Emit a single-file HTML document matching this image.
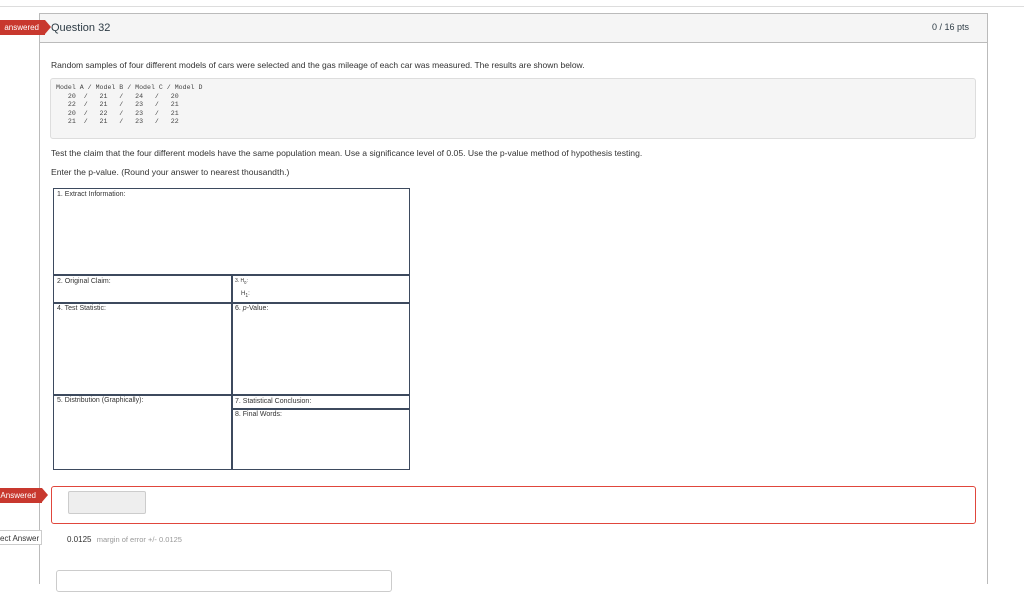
<!DOCTYPE html>
<html><head><style>
body{margin:0;width:1024px;height:581px;overflow:hidden;background:#fff;font-family:"Liberation Sans",sans-serif;position:relative;color:#2d3b45}
.a{position:absolute;white-space:nowrap}
.tag{position:absolute;left:0;height:15px;font-size:8px;line-height:15px;color:#fff;background:#c8382e;text-align:right;padding-right:6px;box-sizing:border-box;white-space:nowrap}
.tag:after{content:"";position:absolute;right:-6px;top:0;border-left:6px solid #c8382e;border-top:7.5px solid transparent;border-bottom:7.5px solid transparent}
.t{font-size:7px;color:#333;position:absolute;white-space:nowrap}
.ln{position:absolute;background:#3d4a5e}
</style></head><body>
<div class="a" style="left:0;top:6px;width:1024px;height:1px;background:#ddd"></div>
<div class="a" style="left:39px;top:13px;width:947px;height:570px;border:1px solid #bbb;border-bottom:none"></div>
<div class="a" style="left:40px;top:14px;width:947px;height:28px;background:#f5f5f5;border-bottom:1px solid #bbb"></div>
<div class="a" style="left:51px;top:22px;font-size:11px;color:#2d3b45">Question 32</div>
<div class="a" style="left:932px;top:22px;font-size:9px;color:#2d3b45">0 / 16 pts</div>
<div class="tag" style="top:20px;width:45px">answered</div>
<div class="a" style="left:51px;top:60px;font-size:8.5px;color:#333">Random samples of four different models of cars were selected and the gas mileage of each car was measured. The results are shown below.</div>
<div class="a" style="left:50px;top:78px;width:924px;height:59px;background:#f5f5f5;border:1px solid #ddd;border-radius:3px"></div>
<pre class="a" style="white-space:pre;margin:0;left:56px;top:84px;font-family:'Liberation Mono',monospace;font-size:6.6px;line-height:8.6px;color:#444">Model A / Model B / Model C / Model D
   20  /   21   /   24   /   20
   22  /   21   /   23   /   21
   20  /   22   /   23   /   21
   21  /   21   /   23   /   22</pre>
<div class="a" style="left:51px;top:148px;font-size:8.6px;color:#333">Test the claim that the four different models have the same population mean. Use a significance level of 0.05. Use the p-value method of hypothesis testing.</div>
<div class="a" style="left:51px;top:167px;font-size:8.6px;color:#333">Enter the p-value. (Round your answer to nearest thousandth.)</div>
<div class="a" style="left:53px;top:188px;width:355px;height:280px;border:1.5px solid #3d4a5e"></div>
<div class="ln" style="left:53px;top:274px;width:357px;height:1.5px"></div>
<div class="ln" style="left:53px;top:302px;width:357px;height:1.5px"></div>
<div class="ln" style="left:53px;top:394px;width:357px;height:1.5px"></div>
<div class="ln" style="left:231px;top:408px;width:179px;height:1.5px"></div>
<div class="ln" style="left:231px;top:274px;width:1.5px;height:196px"></div>
<div class="t" style="left:57px;top:191px">1. Extract Information:</div>
<div class="t" style="left:57px;top:278px">2. Original Claim:</div>
<div class="t" style="left:235px;top:278px;font-size:5px">3. H<sub>0</sub>:</div>
<div class="t" style="left:241px;top:291px;font-size:6px">H<sub>1</sub>:</div>
<div class="t" style="left:57px;top:305px">4. Test Statistic:</div>
<div class="t" style="left:235px;top:305px">6. <i>p</i>-Value:</div>
<div class="t" style="left:57px;top:397px">5. Distribution (Graphically):</div>
<div class="t" style="left:235px;top:398px">7. Statistical Conclusion:</div>
<div class="t" style="left:235px;top:411px">8. Final Words:</div>
<div class="tag" style="top:488px;width:42px">Answered</div>
<div class="a" style="left:51px;top:486px;width:923px;height:36px;border:1px solid #e0463c;border-radius:3px"></div>
<div class="a" style="left:68px;top:491px;width:76px;height:21px;background:#eee;border:1px solid #ccc;border-radius:2px"></div>
<div class="a" style="left:0;top:530px;width:42px;height:15px;background:#fff;border:1px solid #ccc;border-left:none;font-size:8px;line-height:15px;text-align:right;padding-right:4px;box-sizing:border-box;color:#333;overflow:hidden">ect Answer</div>
<div class="a" style="left:67px;top:535px;font-size:8px;color:#333">0.0125 <span style="color:#999;font-size:7.5px;margin-left:3px">margin of error +/- 0.0125</span></div>
<div class="a" style="left:56px;top:570px;width:334px;height:20px;border:1px solid #ccc;border-radius:3px"></div>
</body></html>
